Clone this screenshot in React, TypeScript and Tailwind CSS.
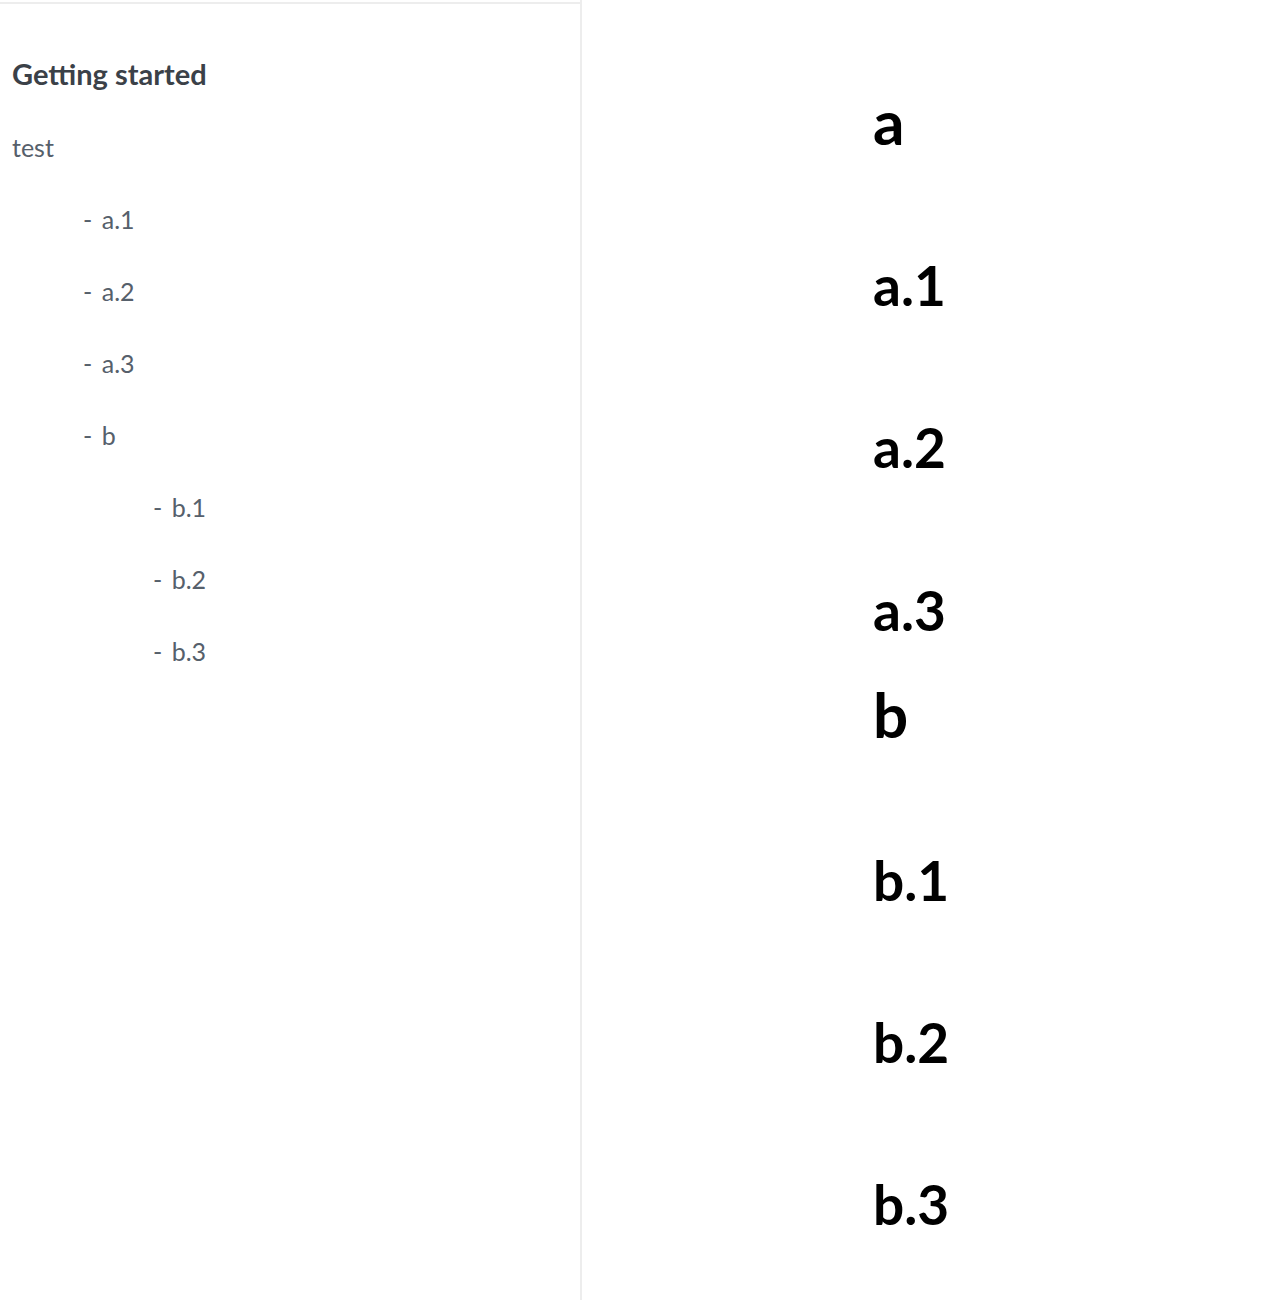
const toc = [
  { label: "a.1", level: 1 },
  { label: "a.2", level: 1 },
  { label: "a.3", level: 1 },
  { label: "b", level: 1 },
  { label: "b.1", level: 2 },
  { label: "b.2", level: 2 },
  { label: "b.3", level: 2 },
];

const Sidebar = () => {
  return (
    <aside className="w-[582px] shrink-0 border-r-2 border-[#ededed] min-h-[1300px]">
      <div className="mt-[2px] border-t-2 border-[#ededed]" />
      <div className="pl-3 pt-[52px]">
        <h2 className="text-[29px] leading-[36px] font-bold text-[#3b4148]">Getting started</h2>
        <ul className="mt-[37px] text-[25px] leading-[36px] text-[#56606b]">
          <li className="h-[72px]">test</li>
          {toc.map((item) => (
            <li
              key={item.label}
              className={`h-[72px] ${item.level === 1 ? "pl-[71px]" : "pl-[141px]"}`}
            >
              <span className="mr-[3px]">-</span> {item.label}
            </li>
          ))}
        </ul>
      </div>
    </aside>
  );
};

const Content = () => {
  return (
    <main className="flex-1 pl-[291px] pt-[81px] text-black">
      <h1 className="text-[62px] leading-[80px] font-bold">a</h1>
      <h2 className="mt-[84px] text-[55px] leading-[80px] font-bold">a.1</h2>
      <h2 className="mt-[82px] text-[55px] leading-[80px] font-bold">a.2</h2>
      <h2 className="mt-[83px] text-[55px] leading-[80px] font-bold">a.3</h2>
      <h1 className="mt-[24px] text-[62px] leading-[80px] font-bold">b</h1>
      <h2 className="mt-[86px] text-[55px] leading-[80px] font-bold">b.1</h2>
      <h2 className="mt-[82px] text-[55px] leading-[80px] font-bold">b.2</h2>
      <h2 className="mt-[82px] text-[55px] leading-[80px] font-bold">b.3</h2>
    </main>
  );
};

export default function App() {
  return (
    <div className="flex bg-white min-h-[1300px]" style={{ fontFamily: "Lato, 'Noto Sans', sans-serif" }}>
      <Sidebar />
      <Content />
    </div>
  );
}
